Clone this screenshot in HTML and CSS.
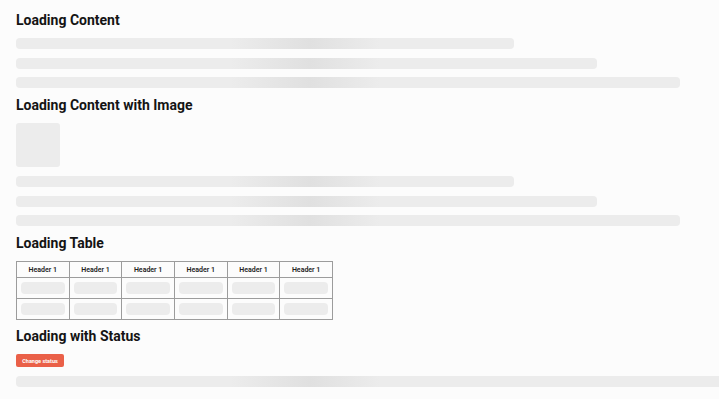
FILE: index.html
```html
<!DOCTYPE html>
<html lang="en">
  <head>
    <meta charset="UTF-8" />
    <meta name="viewport" content="width=device-width, initial-scale=1.0" />
    <title>Skeleton Loading</title>
    <link rel="stylesheet" href="styles.css">
  </head>

  <body>
    <!-- Loading Content -->
    <section class="demo">
      <h2>Loading Content</h2>
      <div class="skeleton line w60"></div>
      <div class="skeleton line w70"></div>
      <div class="skeleton line w80"></div>
    </section>

    <!-- Loading Content with Image -->
    <section class="demo">
      <h2>Loading Content with Image</h2>
      <div class="skeleton avatar"></div>
      <div class="skeleton line w60"></div>
      <div class="skeleton line w70"></div>
      <div class="skeleton line w80"></div>
    </section>

    <!-- Loading Table -->
    <section class="demo table-demo">
      <h2>Loading Table</h2>
      <table class="skeleton-table">
        <thead>
          <tr>
            <th>Header 1</th>
            <th>Header 1</th>
            <th class="group">Header 1</th>
            <th>Header 1</th>
            <th class="group">Header 1</th>
            <th>Header 1</th>
          </tr>
        </thead>
        <tbody>
          <tr>
            <td><div class="skeleton cell"></div></td>
            <td><div class="skeleton cell"></div></td>
            <td class="group"><div class="skeleton cell"></div></td>
            <td><div class="skeleton cell"></div></td>
            <td class="group"><div class="skeleton cell"></div></td>
            <td><div class="skeleton cell"></div></td>
          </tr>
          <tr>
            <td><div class="skeleton cell"></div></td>
            <td><div class="skeleton cell"></div></td>
            <td class="group"><div class="skeleton cell"></div></td>
            <td><div class="skeleton cell"></div></td>
            <td class="group"><div class="skeleton cell"></div></td>
            <td><div class="skeleton cell"></div></td>
          </tr>
        </tbody>
      </table>
    </section>

    <!-- Loading with Status -->
    <section class="demo">
      <h2>Loading with Status</h2>
      <button class="status-button">Change status</button>
      <div class="skeleton line full"></div>
    </section>
  </body>
</html>
```

FILE: styles.css
```css
/* General Styles */
html,
body {
  overflow: hidden;
}

body {
  font-family: "Roboto", Arial, sans-serif;
  margin: 0;
  padding: 12px 0 0 16px;
  background-color: #fcfcfc;
  color: #141414;
}

/* Sections */
.demo {
  margin-bottom: 9px;
}

.table-demo {
  margin-bottom: 8px;
}

.demo h2 {
  font-size: 14px;
  line-height: 16px;
  font-weight: 700;
  margin: 0 0 10px;
}

/* Skeleton blocks */
.skeleton {
  background-color: #ececec;
  background-image: linear-gradient(
    90deg,
    #ececec 230px,
    #e0e0e0 310px,
    #ececec 380px
  );
  background-attachment: fixed;
}

.line {
  height: 11px;
  border-radius: 4px;
  margin-bottom: 8.5px;
}

.line:last-child {
  margin-bottom: 0;
}

.w60 {
  width: 498px;
}

.w70 {
  width: 581px;
}

.w80 {
  width: 664px;
}

/* runs on past the right edge of the window */
.full {
  border-radius: 4px 0 0 4px;
}

.avatar {
  width: 44px;
  height: 44px;
  border-radius: 3px;
  margin-bottom: 9px;
  background-image: none;
}

/* Table */
.skeleton-table {
  border-collapse: collapse;
  width: 317px;
  table-layout: fixed;
  border: 1px solid #a5a5a5;
}

.skeleton-table th,
.skeleton-table td {
  border: 1px solid #9c9c9c;
  padding: 0;
}

.skeleton-table .group {
  border-left-color: #555;
}

.skeleton-table th {
  font-size: 7px;
  font-weight: 600;
  height: 15px;
  text-align: center;
  color: #222;
}

.skeleton-table td {
  height: 20px;
  padding: 0 4px;
}

.cell {
  height: 12px;
  border-radius: 4px;
  background-image: none;
}

/* Status button */
.status-button {
  display: block;
  background-color: #ea6048;
  color: white;
  border: none;
  border-radius: 2px;
  font-family: "Roboto", Arial, sans-serif;
  font-size: 5.5px;
  font-weight: 700;
  width: 48px;
  height: 13px;
  padding: 0;
  margin-bottom: 9px;
  cursor: pointer;
}
```
